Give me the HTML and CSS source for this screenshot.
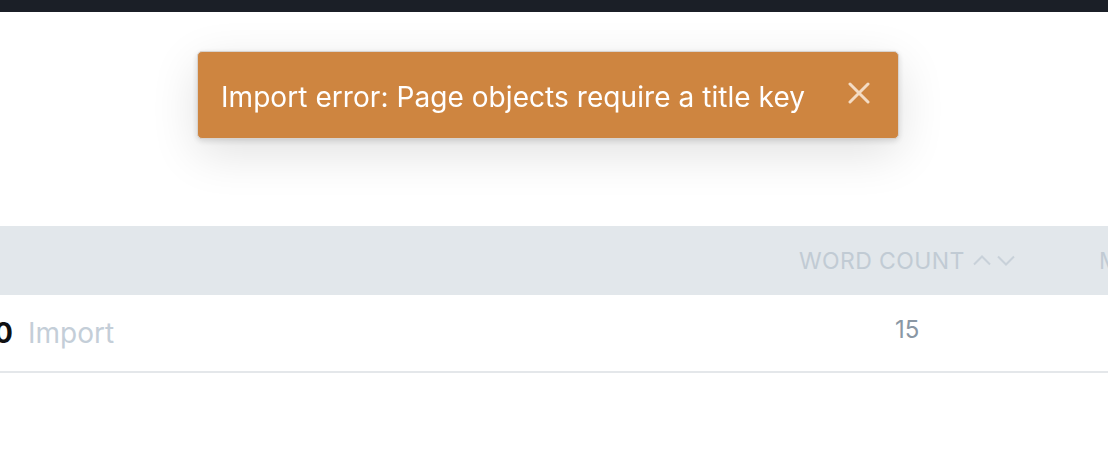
FILE: index.html
```html
<!DOCTYPE html>
<html>
<head>
<meta charset="utf-8">
<link rel="stylesheet" href="styles.css">
</head>
<body>
<div class="topbar"></div>
<main class="content">
  <div class="table-wrap">
    <table class="table">
      <thead>
        <tr>
          <th class="col-title"></th>
          <th class="col-words">
            <span class="th-inner">WORD COUNT
              <span class="sort">
                <svg width="18" height="11" viewBox="0 0 18 11"><path d="M1 9.5 L9 1.5 L17 9.5" fill="none" stroke="currentColor" stroke-width="2"/></svg>
                <svg width="18" height="11" viewBox="0 0 18 11"><path d="M1 1.5 L9 9.5 L17 1.5" fill="none" stroke="currentColor" stroke-width="2"/></svg>
              </span>
            </span>
          </th>
          <th class="col-more">MODIFIED</th>
        </tr>
      </thead>
      <tbody>
        <tr>
          <td class="col-title"><span class="num">10</span><span class="tag">Import</span></td>
          <td class="col-words num-cell">15</td>
          <td class="col-more"></td>
        </tr>
      </tbody>
    </table>
  </div>
</main>
<div class="toast">
  <span class="toast-text">Import error: Page objects require a title key</span>
  <button class="toast-close" aria-label="Close">
    <svg width="22" height="22" viewBox="0 0 22 22"><path d="M2 2 L20 20 M20 2 L2 20" stroke="currentColor" stroke-width="3" stroke-linecap="round"/></svg>
  </button>
</div>
</body>
</html>
```
FILE: styles.css
```css
html, body {
  margin: 0;
  padding: 0;
  background: #ffffff;
  font-family: Inter, "Helvetica Neue", Arial, sans-serif;
  overflow: hidden;
}
.topbar {
  height: 12px;
  background: #1b1f27;
}
.content {
  padding-top: 214px;
}
.table-wrap {
  margin-left: -40px;
}
.table {
  border-collapse: collapse;
  width: 1300px;
}
.table th {
  background: #e2e7eb;
  height: 69px;
  padding: 0;
  text-align: left;
  font-weight: 400;
  font-size: 23px;
  color: #c1cbd4;
  letter-spacing: 0.4px;
}
.table td {
  height: 76px;
  padding: 0;
  border-bottom: 2px solid #e4e7ea;
}
.col-title {
  width: 839px;
}
.col-words {
  width: 300px;
}
.th-inner {
  display: inline-flex;
  align-items: center;
  gap: 8px;
}
.sort {
  display: inline-flex;
  gap: 6px;
  color: #c8d1d9;
  margin-top: -1px;
}
.num {
  font-weight: 700;
  font-size: 28px;
  color: #111;
  margin-left: 22px;
}
.tag {
  margin-left: 15px;
  font-size: 28px;
  color: #c4ced8;
}
.num-cell {
  font-size: 24px;
  color: #8a97a4;
  padding-left: 96px !important;
  vertical-align: top;
  padding-top: 20px !important;
  box-sizing: border-box;
}
.toast {
  position: fixed;
  left: 197px;
  top: 51px;
  width: 702px;
  height: 88px;
  box-sizing: border-box;
  background: #ce8540;
  border: 1px solid #d8d3cf;
  border-radius: 5px;
  box-shadow: 0 14px 48px rgba(0,0,0,0.12), 0 2px 6px rgba(0,0,0,0.14);
  display: flex;
  align-items: center;
  justify-content: space-between;
  padding: 0 28px 0 23px;
}
.toast-text {
  color: #ffffff;
  font-size: 28px;
  letter-spacing: 0.06px;
  margin-top: 4px;
}
.toast-close {
  background: none;
  border: 0;
  padding: 0;
  color: #f4dcc4;
  display: flex;
  margin-top: -5px;
}
```
